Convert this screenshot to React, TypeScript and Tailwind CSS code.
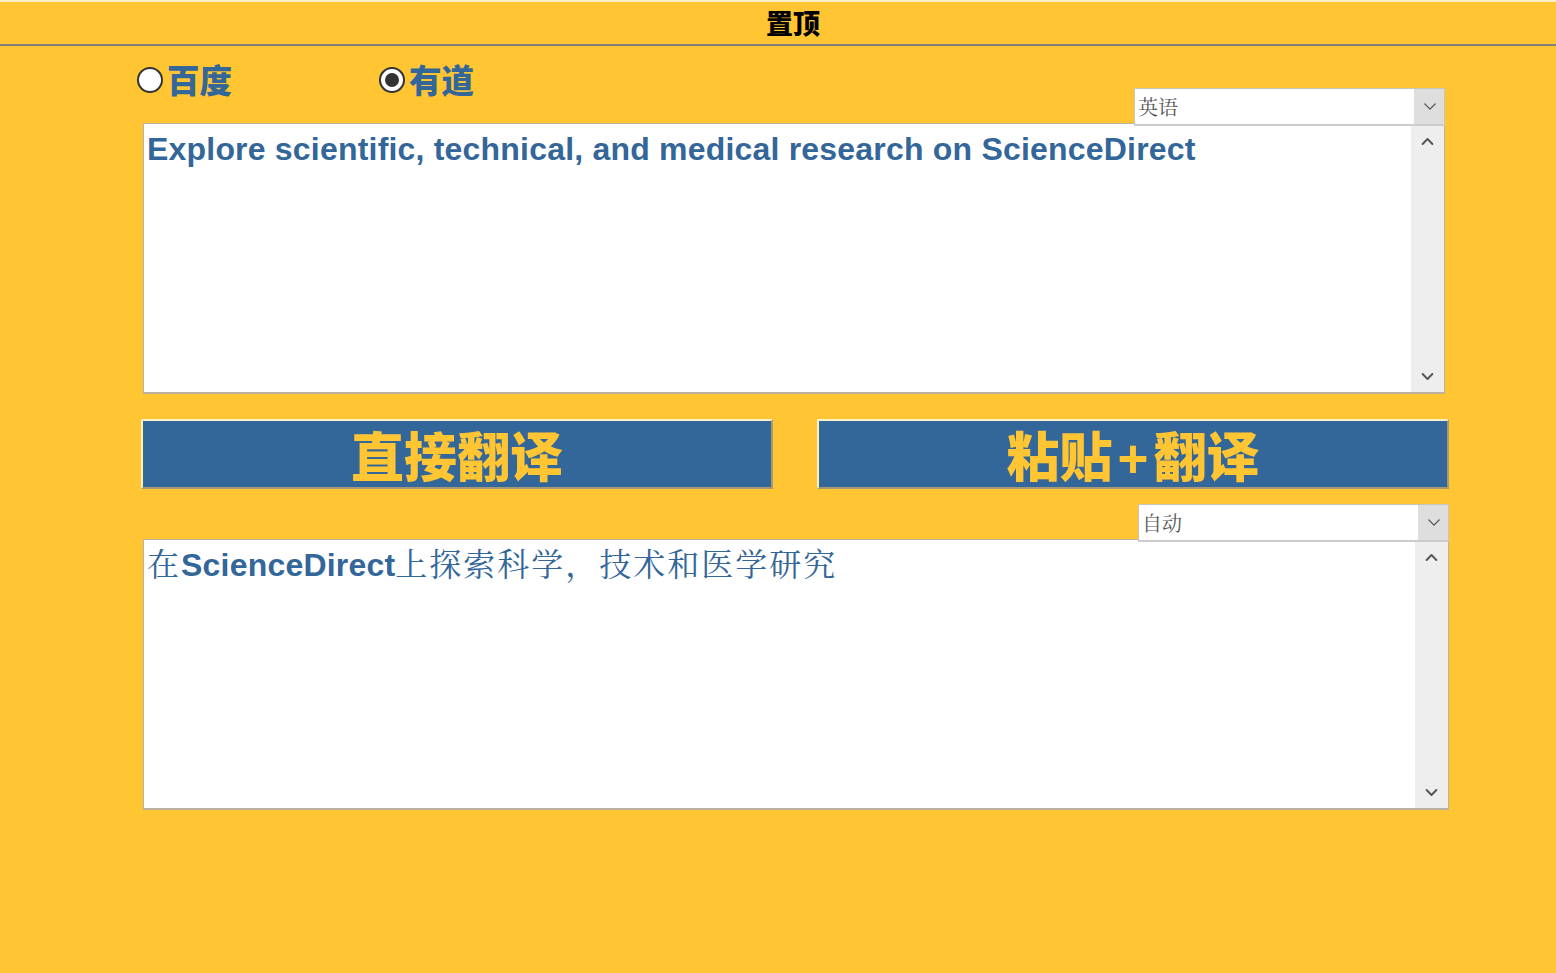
import React from "react";

const cjk = "font-['Liberation_Sans','Noto_Sans_CJK_SC',sans-serif]";

function Chevron({ up, className }: { up?: boolean; className: string }) {
  return (
    <svg viewBox="0 0 16 10" className={className} fill="none" stroke="currentColor" strokeLinecap="round" strokeLinejoin="round">
      <path d={up ? "M2 8 L8 2 L14 8" : "M2 2 L8 8 L14 2"} />
    </svg>
  );
}

function Radio({ label, checked }: { label: string; checked?: boolean }) {
  return (
    <label className="flex items-start w-[242px]">
      <span className="mt-[21px] w-[26px] h-[26px] rounded-full border-2 border-[#333333] bg-white flex items-center justify-center shrink-0">
        {checked && <span className="w-[14px] h-[14px] rounded-full bg-[#333333]" />}
      </span>
      <span className={`${cjk} mt-[14px] ml-[4px] text-[32.5px] leading-[44px] font-black text-[#336699]`}>{label}</span>
    </label>
  );
}

function Select({ label, className }: { label: string; className: string }) {
  return (
    <div className={`${className} relative z-10 h-[38px] w-[311px] flex bg-white border border-[#c9c4b8] border-b-2 border-b-[#cccccc]`}>
      <span className="flex-1 pl-[3px] font-['Noto_Serif_CJK_SC','Noto_Sans_CJK_SC',serif] text-[20px] leading-[35px] text-[#555555]">{label}</span>
      <span className="w-[30px] bg-[#dedede] flex items-center justify-center pl-[1px] text-[#555555]">
        <Chevron className="w-[14px] h-[9px] [stroke-width:1.6]" />
      </span>
    </div>
  );
}

function Box({ children, className, textClass }: { children: React.ReactNode; className: string; textClass: string }) {
  return (
    <div className={`${className} h-[271px] flex bg-white border border-[#b9b2a0] border-b-2`}>
      <div className={`${textClass} flex-1 pl-[3px] text-[32px] leading-[40px] tracking-[0.2px] font-bold text-[#336699] font-['Liberation_Sans','Noto_Sans_CJK_SC',sans-serif]`}>
        {children}
      </div>
      <div className="w-[33px] bg-[#eeeeee] flex flex-col items-center justify-between pt-[13px] pb-[11px] text-[#555555]">
        <Chevron up className="w-[13px] h-[9px] [stroke-width:2.4]" />
        <Chevron className="w-[13px] h-[9px] [stroke-width:2.4]" />
      </div>
    </div>
  );
}

function Btn({ children }: { children: React.ReactNode }) {
  return (
    <button className={`${cjk} w-[632px] h-[70px] pt-[8px] bg-[#336699] border-2 border-t-[#fdf0c8] border-l-[#fdf0c8] border-r-[#a89a70] border-b-[#a89a70] text-[#FFC533] text-[53px] leading-[60px] font-black`}>
      {children}
    </button>
  );
}

const Serif = ({ children }: { children: React.ReactNode }) => (
  <span className="font-normal tracking-[2px] font-['Noto_Serif_CJK_SC',serif]">{children}</span>
);

export default function App() {
  return (
    <div className="min-h-[973px] bg-[#FFC533] border-t-2 border-[#fdf0c8]">
      <div className={`${cjk} h-[44px] pl-[30px] border-b-2 border-[#808080] text-center text-[27px] leading-[46px] font-black text-black`}>
        置顶
      </div>
      <div className="pl-[137px] flex h-[42px]">
        <Radio label="百度" />
        <Radio label="有道" checked />
      </div>
      <div className="ml-[141px] w-[1308px] flex flex-col">
        <Select label="英语" className="self-end mr-[4px]" />
        <Box className="ml-[2px] mr-[4px] -mt-[3px]" textClass="pt-[5px]">Explore scientific, technical, and medical research on ScienceDirect</Box>
        <div className="mt-[25px] flex justify-between">
          <Btn>直接翻译</Btn>
          <Btn>粘贴<span className="px-[5px]">+</span>翻译</Btn>
        </div>
        <Select label="自动" className="self-end mt-[15px]" />
        <Box className="ml-[2px] -mt-[3px]" textClass="pt-[2px]">
          <Serif>在</Serif>ScienceDirect<Serif>上探索科学，技术和医学研究</Serif>
        </Box>
      </div>
    </div>
  );
}
